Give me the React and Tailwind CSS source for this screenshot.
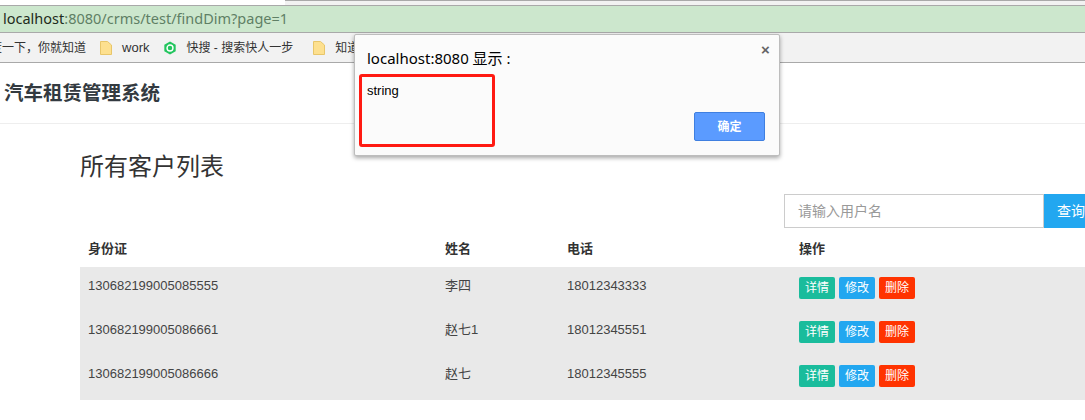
import React from 'react';

const sans = 'font-["Liberation_Sans","Noto_Sans_CJK_SC",sans-serif]';
const ui = 'font-["Noto_Sans","Noto_Sans_CJK_SC",sans-serif]';

const rows = [
  { id: '130682199005085555', name: '李四', phone: '18012343333' },
  { id: '130682199005086661', name: '赵七1', phone: '18012345551' },
  { id: '130682199005086666', name: '赵七', phone: '18012345555' },
];

function Folder() {
  return (
    <svg width="12" height="14" viewBox="0 0 12 14" className="shrink-0">
      <path d="M0.5 0.5H7.5L11.5 4V13.5H0.5Z" fill="#fde08f" stroke="#e8c66a" />
    </svg>
  );
}

function Bookmarks() {
  return (
    <div className="h-[30px] bg-[#f2f2f2] border-b border-[#a9a9a9] flex items-center overflow-hidden text-[12px] text-[#333] whitespace-nowrap">
      <span className="ml-[-10px] shrink-0">度一下，你就知道</span>
      <span className="ml-[14px]"><Folder /></span>
      <span className="ml-[10px] text-[13px]">work</span>
      <svg width="14" height="14" viewBox="0 0 14 16" className="ml-[14px] shrink-0">
        <path d="M7 0.5L13.5 4.2V11.8L7 15.5L0.5 11.8V4.2Z" fill="#22c55e" />
        <circle cx="7" cy="8" r="3.4" fill="none" stroke="#fff" strokeWidth="1.6" />
      </svg>
      <span className="ml-[9px] shrink-0">快搜 - 搜索快人一步</span>
      <span className="ml-[20px]"><Folder /></span>
      <span className="ml-[10px]">知道</span>
    </div>
  );
}

function Dialog() {
  return (
    <div className="absolute left-[354px] top-[34px] w-[426px] h-[122px] bg-[#fbfbfb] rounded-[2px] border border-[#bdbdbd] shadow-[0_2px_4px_rgba(0,0,0,0.35)]">
      <div className={`absolute left-[12px] top-[13px] text-[15px] leading-5 text-black whitespace-pre ${ui}`}>localhost:8080 显示 :</div>
      <div className="absolute left-[12px] top-[47px] text-[13px] leading-[17px] text-black">string</div>
      <span className="absolute left-[406px] top-[5px] text-[15px] leading-5 font-bold text-[#666]">×</span>
      <div className="absolute left-[4px] top-[39px] w-[136px] h-[73px] border-[3px] border-[#ff1a12] rounded-[3px]" />
      <button className="absolute left-[339px] top-[77px] w-[71px] h-[29px] bg-[#5b9bff] border border-[#3f7fe0] rounded-[2px] text-white text-[12px] font-bold">确定</button>
    </div>
  );
}

function ActionButton({ label, className }) {
  return (
    <span className={`w-9 h-[22px] rounded-[2px] text-white text-[12px] leading-[22px] text-center ${className}`}>{label}</span>
  );
}

export default function App() {
  return (
    <div className={`relative w-[1085px] h-[420px] overflow-hidden bg-white ${sans}`}>
      <div className="h-[6px] flex border-b border-[#a9a9a9]">
        <div className="w-[285px] bg-white" />
        <div className="flex-1 bg-[#f2f2f2] border-t border-[#a9a9a9]" />
      </div>
      <div className={`h-[27px] bg-[#cce7cd] border-b border-[#a9a9a9] flex items-center pl-[3px] text-[14.5px] text-[#5f7f65] ${ui}`}>
        <span className="text-[#1e2b20]">localhost</span>:8080/crms/test/findDim?page=1
      </div>
      <Bookmarks />
      <div className="h-[61px] border-b border-[#eeeeee] flex items-center pl-[4px] pt-[2px] text-[19.5px] font-bold text-[#333a40]">
        汽车租赁管理系统
      </div>

      <main className="pl-[80px]">
        <h1 className="mt-[28px] h-[30px] text-[24px] leading-[30px] font-normal text-[#333]">所有客户列表</h1>
        <div className="mt-[12px] flex justify-start pl-[704px] whitespace-nowrap">
          <div className="w-[260px] h-[34px] shrink-0 border border-[#cccccc] pl-[13px] text-[14px] leading-[32px] text-[#999]">请输入用户名</div>
          <div className="w-[61px] h-[34px] shrink-0 bg-[#22a7f0] text-white text-[14px] leading-[34px] pl-[13px]">查询</div>
        </div>
        <div className="grid grid-cols-[357px_121px_233px_1fr] h-[39px] items-center pl-[8px] pt-[2px] text-[13px] font-bold text-[#333]">
          <span>身份证</span>
          <span>姓名</span>
          <span className="pl-px">电话</span>
          <span>操作</span>
        </div>
        <div className="bg-[#e9e9e9] h-[133px]">
          {rows.map((row) => (
            <div key={row.id} className="grid grid-cols-[357px_121px_233px_1fr] h-[44px] pt-[10px] pl-[8px] text-[13px] leading-[17px] text-[#444]">
              <span>{row.id}</span>
              <span>{row.name}</span>
              <span className="pl-px">{row.phone}</span>
              <div className="flex gap-1 h-[22px]">
                <ActionButton label="详情" className="bg-[#1abc9c]" />
                <ActionButton label="修改" className="bg-[#22a7f0]" />
                <ActionButton label="删除" className="bg-[#ff3300]" />
              </div>
            </div>
          ))}
        </div>
      </main>

      <Dialog />
    </div>
  );
}
